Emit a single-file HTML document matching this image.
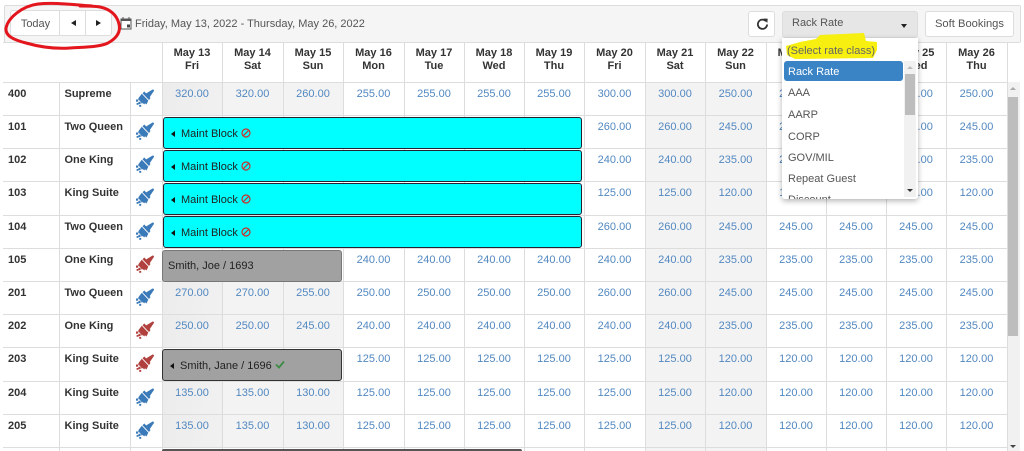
<!DOCTYPE html>
<html>
<head>
<meta charset="utf-8">
<title>Rate calendar</title>
<style>
html,body{margin:0;padding:0;background:#fff;width:1024px;height:451px;overflow:hidden}
#page{position:relative;width:1024px;height:451px;overflow:hidden;font-family:"Liberation Sans",sans-serif;font-size:11px;color:#333;filter:blur(.3px)}
.abs{position:absolute}
#bar{left:4px;top:5px;width:1015px;height:36px;background:#f5f5f5;border:1px solid #ddd;border-radius:2px}
.btn{position:absolute;box-sizing:border-box;background:#fff;border:1px solid #ddd;border-radius:3px;color:#555;text-align:center;font-size:11px}
#range{left:135px;top:18px;font-size:11px;color:#555;white-space:nowrap}
table{position:absolute;left:3px;top:42px;border-collapse:collapse;table-layout:fixed;width:1004px}
td,th{border:1px solid #ddd;padding:0;overflow:hidden;box-sizing:border-box}
th{font-size:11px;line-height:13px;font-weight:bold;color:#333;text-align:center;vertical-align:top;padding-top:4px}
th:nth-child(1),th:nth-child(2){border-left:0;border-right:0}
th:nth-child(3){border-left:0}
td{vertical-align:top;text-align:center;color:#5288c0;font-size:11px;line-height:14px;padding-top:4px}
td:nth-child(1),td:nth-child(2){font-weight:bold;color:#333;text-align:left;padding-top:4px}
td:nth-child(1){padding-left:5px;border-left:0}
th:nth-child(1){border-left:0}
td:nth-child(2){padding-left:5px}
td:nth-child(12),td:nth-child(13){background:#f3f3f3}
tr.s td:nth-child(4){background:linear-gradient(100deg,#ececec,#f1f1f1)}
tr.s td:nth-child(5),tr.s td:nth-child(6){background:#f3f3f3}
tr.e td{padding:0;line-height:0;font-size:0;border-bottom:0}
.blk{position:absolute;box-sizing:border-box;border-radius:3px;color:#222;font-size:11px;line-height:33px;white-space:nowrap;overflow:hidden}
.cy{left:163px;width:419px;height:32px;background:#0ff;border:1px solid #223}
.gr{left:162px;width:180px;height:32px;background:#a1a1a1}
.ar{display:inline-block;width:0;height:0;border-top:3px solid transparent;border-bottom:3px solid transparent;border-right:4px solid #111;margin:0 6px 1px 7px;vertical-align:middle}
.ico{position:absolute;left:136px;width:18px;height:18px}
#menu{left:782px;top:38px;width:136px;height:161px;background:#fff;box-shadow:0 2px 6px rgba(0,0,0,.3);border-radius:0 0 3px 3px;overflow:hidden;font-size:11px;color:#555}
#menu div{position:absolute;left:5px;white-space:nowrap;line-height:14px}
</style>
</head>
<body>
<div id="page">
<svg width="0" height="0" style="position:absolute">
<defs>
<symbol id="br" viewBox="0 0 18 18">
<path d="M10 4.500L16.400 .6c1-.5 2 .6 1.400 1.500L13.500 8.500z"/>
<path d="M8.300 2.500L14.500 9 13 11 6.500 4.300z"/>
<path d="M5.800 4.800L12.300 11.600 10.500 15.500 9 14.200 8.200 15.500 6.800 14 5.700 14.700 4.900 12.700 3.600 12.500 3.400 11 2 10.500 2.800 8.600z"/>
<rect x="0" y="10.500" width="2.200" height="2.200"/><rect x="2.400" y="13" width="2.200" height="2.200"/><rect x=".6" y="14" width="1.800" height="1.800"/><rect x="3.200" y="16" width="2" height="1.800"/>
</symbol>
</defs>
</svg>

<div class="abs" id="bar"></div>

<div class="btn" style="left:10px;top:10px;width:50px;height:26px;line-height:26px;border-radius:3px 0 0 3px;border-right:0">Today</div>
<div class="btn" style="left:59px;top:10px;width:27px;height:26px;border-radius:0;border-right:0"><span class="abs" style="left:11px;top:9px;width:0;height:0;border-top:3.500px solid transparent;border-bottom:3.500px solid transparent;border-right:5px solid #222"></span></div>
<div class="btn" style="left:85px;top:10px;width:27px;height:26px;border-radius:0 3px 3px 0"><span class="abs" style="left:10px;top:9px;width:0;height:0;border-top:3.500px solid transparent;border-bottom:3.500px solid transparent;border-left:5px solid #222"></span></div>

<svg class="abs" style="left:120px;top:16px" width="12" height="14" viewBox="0 0 12 14">
<path d="M1 3h10v10H1z" fill="#fff" stroke="#555" stroke-width="1"/><path d="M1 2.500h10v2.500H1z" fill="#555"/><path d="M3 1v2M9 1v2" stroke="#555" stroke-width="1"/><rect x="7" y="8.500" width="3" height="3" fill="#444"/>
</svg>
<div class="abs" id="range">Friday, May 13, 2022 - Thursday, May 26, 2022</div>

<div class="btn" style="left:748px;top:11px;width:27px;height:26px">
<svg class="abs" style="left:7px;top:6px" width="13" height="13" viewBox="0 0 14 14"><path d="M10.900 3.600A5 5 0 1 0 12 7" fill="none" stroke="#333" stroke-width="1.900"/><path d="M8.200 .6l4.400 .2-.4 4.600z" fill="#333"/></svg>
</div>
<div class="btn" style="left:782px;top:11px;width:136px;height:27px;background:#e6e6e6;border-color:#ddd;text-align:left;padding-left:9px;line-height:23px">Rack Rate<span class="abs" style="left:118px;top:12px;width:0;height:0;border-left:3px solid transparent;border-right:3px solid transparent;border-top:4px solid #222"></span></div>
<div class="btn" style="left:925px;top:11px;width:89px;height:26px;line-height:25px;font-size:11.200px">Soft Bookings</div>

<table>
<colgroup><col style="width:56px"><col style="width:71px"><col style="width:32px"><col style="width:60px"><col style="width:61px"><col style="width:60px"><col style="width:61px"><col style="width:60px"><col style="width:60px"><col style="width:60px"><col style="width:61px"><col style="width:60px"><col style="width:61px"><col style="width:60px"><col style="width:60px"><col style="width:60px"><col style="width:61px"></colgroup>
<tr style="height:40px"><th></th><th></th><th></th><th>May 13<br>Fri</th><th>May 14<br>Sat</th><th>May 15<br>Sun</th><th>May 16<br>Mon</th><th>May 17<br>Tue</th><th>May 18<br>Wed</th><th>May 19<br>Thu</th><th>May 20<br>Fri</th><th>May 21<br>Sat</th><th>May 22<br>Sun</th><th>May 23<br>Mon</th><th>May 24<br>Tue</th><th>May 25<br>Wed</th><th>May 26<br>Thu</th></tr>
<tr class="s" style="height:33px"><td>400</td><td>Supreme</td><td></td><td>320.00</td><td>320.00</td><td>260.00</td><td>255.00</td><td>255.00</td><td>255.00</td><td>255.00</td><td>300.00</td><td>300.00</td><td>250.00</td><td>250.00</td><td>250.00</td><td>250.00</td><td>250.00</td></tr>
<tr style="height:33px"><td>101</td><td>Two Queen</td><td></td><td></td><td></td><td></td><td></td><td></td><td></td><td></td><td>260.00</td><td>260.00</td><td>245.00</td><td>245.00</td><td>245.00</td><td>245.00</td><td>245.00</td></tr>
<tr style="height:33px"><td>102</td><td>One King</td><td></td><td></td><td></td><td></td><td></td><td></td><td></td><td></td><td>240.00</td><td>240.00</td><td>235.00</td><td>235.00</td><td>235.00</td><td>235.00</td><td>235.00</td></tr>
<tr style="height:34px"><td>103</td><td>King Suite</td><td></td><td></td><td></td><td></td><td></td><td></td><td></td><td></td><td>125.00</td><td>125.00</td><td>120.00</td><td>120.00</td><td>120.00</td><td>120.00</td><td>120.00</td></tr>
<tr style="height:33px"><td>104</td><td>Two Queen</td><td></td><td></td><td></td><td></td><td></td><td></td><td></td><td></td><td>260.00</td><td>260.00</td><td>245.00</td><td>245.00</td><td>245.00</td><td>245.00</td><td>245.00</td></tr>
<tr style="height:33px"><td>105</td><td>One King</td><td></td><td></td><td></td><td></td><td>240.00</td><td>240.00</td><td>240.00</td><td>240.00</td><td>240.00</td><td>240.00</td><td>235.00</td><td>235.00</td><td>235.00</td><td>235.00</td><td>235.00</td></tr>
<tr class="s" style="height:33px"><td>201</td><td>Two Queen</td><td></td><td>270.00</td><td>270.00</td><td>255.00</td><td>250.00</td><td>250.00</td><td>250.00</td><td>250.00</td><td>260.00</td><td>260.00</td><td>245.00</td><td>245.00</td><td>245.00</td><td>245.00</td><td>245.00</td></tr>
<tr class="s" style="height:33px"><td>202</td><td>One King</td><td></td><td>250.00</td><td>250.00</td><td>245.00</td><td>240.00</td><td>240.00</td><td>240.00</td><td>240.00</td><td>240.00</td><td>240.00</td><td>235.00</td><td>235.00</td><td>235.00</td><td>235.00</td><td>235.00</td></tr>
<tr style="height:34px"><td>203</td><td>King Suite</td><td></td><td></td><td></td><td></td><td>125.00</td><td>125.00</td><td>125.00</td><td>125.00</td><td>125.00</td><td>125.00</td><td>120.00</td><td>120.00</td><td>120.00</td><td>120.00</td><td>120.00</td></tr>
<tr class="s" style="height:33px"><td>204</td><td>King Suite</td><td></td><td>135.00</td><td>135.00</td><td>130.00</td><td>125.00</td><td>125.00</td><td>125.00</td><td>125.00</td><td>125.00</td><td>125.00</td><td>120.00</td><td>120.00</td><td>120.00</td><td>120.00</td><td>120.00</td></tr>
<tr class="s" style="height:33px"><td>205</td><td>King Suite</td><td></td><td>135.00</td><td>135.00</td><td>130.00</td><td>125.00</td><td>125.00</td><td>125.00</td><td>125.00</td><td>125.00</td><td>125.00</td><td>120.00</td><td>120.00</td><td>120.00</td><td>120.00</td><td>120.00</td></tr>
<tr class="e" style="height:3px"><td></td><td></td><td></td><td></td><td></td><td></td><td></td><td></td><td></td><td></td><td></td><td></td><td></td><td></td><td></td><td></td><td></td></tr>
</table>

<svg class="ico" style="top:89px;fill:#3a7ab8"><use href="#br"/></svg>
<svg class="ico" style="top:122px;fill:#3a7ab8"><use href="#br"/></svg>
<svg class="ico" style="top:155px;fill:#3a7ab8"><use href="#br"/></svg>
<svg class="ico" style="top:188px;fill:#3a7ab8"><use href="#br"/></svg>
<svg class="ico" style="top:222px;fill:#3a7ab8"><use href="#br"/></svg>
<svg class="ico" style="top:255px;fill:#b0413e"><use href="#br"/></svg>
<svg class="ico" style="top:288px;fill:#3a7ab8"><use href="#br"/></svg>
<svg class="ico" style="top:321px;fill:#b0413e"><use href="#br"/></svg>
<svg class="ico" style="top:354px;fill:#b0413e"><use href="#br"/></svg>
<svg class="ico" style="top:388px;fill:#3a7ab8"><use href="#br"/></svg>
<svg class="ico" style="top:421px;fill:#3a7ab8"><use href="#br"/></svg>

<div class="blk cy" style="top:117px"><span class="ar"></span>Maint Block <svg width="10" height="10" viewBox="0 0 10 10" style="vertical-align:-1px"><circle cx="5" cy="5" r="4" fill="none" stroke="#c9302c" stroke-width="1.200"/><path d="M2.200 7.800L7.800 2.200" stroke="#c9302c" stroke-width="1.200"/></svg></div>
<div class="blk cy" style="top:150px"><span class="ar"></span>Maint Block <svg width="10" height="10" viewBox="0 0 10 10" style="vertical-align:-1px"><circle cx="5" cy="5" r="4" fill="none" stroke="#c9302c" stroke-width="1.200"/><path d="M2.200 7.800L7.800 2.200" stroke="#c9302c" stroke-width="1.200"/></svg></div>
<div class="blk cy" style="top:183px"><span class="ar"></span>Maint Block <svg width="10" height="10" viewBox="0 0 10 10" style="vertical-align:-1px"><circle cx="5" cy="5" r="4" fill="none" stroke="#c9302c" stroke-width="1.200"/><path d="M2.200 7.800L7.800 2.200" stroke="#c9302c" stroke-width="1.200"/></svg></div>
<div class="blk cy" style="top:216px"><span class="ar"></span>Maint Block <svg width="10" height="10" viewBox="0 0 10 10" style="vertical-align:-1px"><circle cx="5" cy="5" r="4" fill="none" stroke="#c9302c" stroke-width="1.200"/><path d="M2.200 7.800L7.800 2.200" stroke="#c9302c" stroke-width="1.200"/></svg></div>
<div class="blk gr" style="top:250px;border:1px solid #777;padding-left:5px;line-height:31px">Smith, Joe / 1693</div>
<div class="blk gr" style="top:349px;border:1px solid #333"><span class="ar"></span>Smith, Jane / 1696 <svg width="10" height="9" viewBox="0 0 10 9"><path d="M1 4.500l3 3 5-6" fill="none" stroke="#3c8c46" stroke-width="1.800"/></svg></div>
<div class="abs" style="left:162px;top:449px;width:360px;height:2px;background:#555;border-radius:3px 3px 0 0"></div>

<div class="abs" style="left:1008px;top:82px;width:12px;height:369px;background:#f1f1f1"></div>
<div class="abs" style="left:1008px;top:97px;width:10px;height:239px;background:#bdbdbd"></div>
<div class="abs" style="left:1010px;top:87px;width:0;height:0;border-left:3px solid transparent;border-right:3px solid transparent;border-bottom:3px solid #aaa"></div>
<div class="abs" style="left:1010px;top:445px;width:0;height:0;border-left:3px solid transparent;border-right:3px solid transparent;border-top:3px solid #444"></div>

<div class="abs" id="menu">
<div style="left:2px;top:23px;width:119px;height:20px;background:#3a84c5;border-radius:3px"></div>
<div style="left:6px;top:27px;color:#fff">Rack Rate</div>
<div style="left:6px;top:48px">AAA</div>
<div style="left:6px;top:70px">AARP</div>
<div style="left:6px;top:92px">CORP</div>
<div style="left:6px;top:113px">GOV/MIL</div>
<div style="left:6px;top:134px">Repeat Guest</div>
<div style="left:6px;top:155px">Discount</div>
<div style="left:122px;top:23px;width:12px;height:136px;background:#f1f1f1"></div>
<div style="left:123px;top:36px;width:10px;height:41px;background:#bdbdbd"></div>
<div style="left:125px;top:28px;width:0;height:0;border-left:3px solid transparent;border-right:3px solid transparent;border-bottom:3px solid #bbb"></div>
<div style="left:125px;top:151px;width:0;height:0;border-left:3px solid transparent;border-right:3px solid transparent;border-top:3px solid #333"></div>
</div>

<svg class="abs" style="left:780px;top:30px" width="104" height="32" viewBox="780 30 104 32">
<path d="M786 46L800 42 816 39 820 35 864 33 866 41 877 42 877 50 873 58 795 59 787 55z" fill="#f6ef10"/>
</svg>
<div class="abs" style="left:787px;top:44px;font-size:11px;line-height:14px;color:#666;white-space:nowrap">(Select rate class)</div>

<svg class="abs" style="left:0;top:0" width="130" height="52" viewBox="0 0 130 52">
<path d="M92 6C75 5 55 2 38 4C22 6 8 18 6 28C5 36 14 40 26 43C40 47 55 49 70 48C85 47 100 47 108 43C117 38 121 32 119 24C117 15 110 9 100 7C95 6 88 6 80 6" fill="none" stroke="#e2161c" stroke-width="3" stroke-linecap="round"/>
</svg>
</div>
</body>
</html>
